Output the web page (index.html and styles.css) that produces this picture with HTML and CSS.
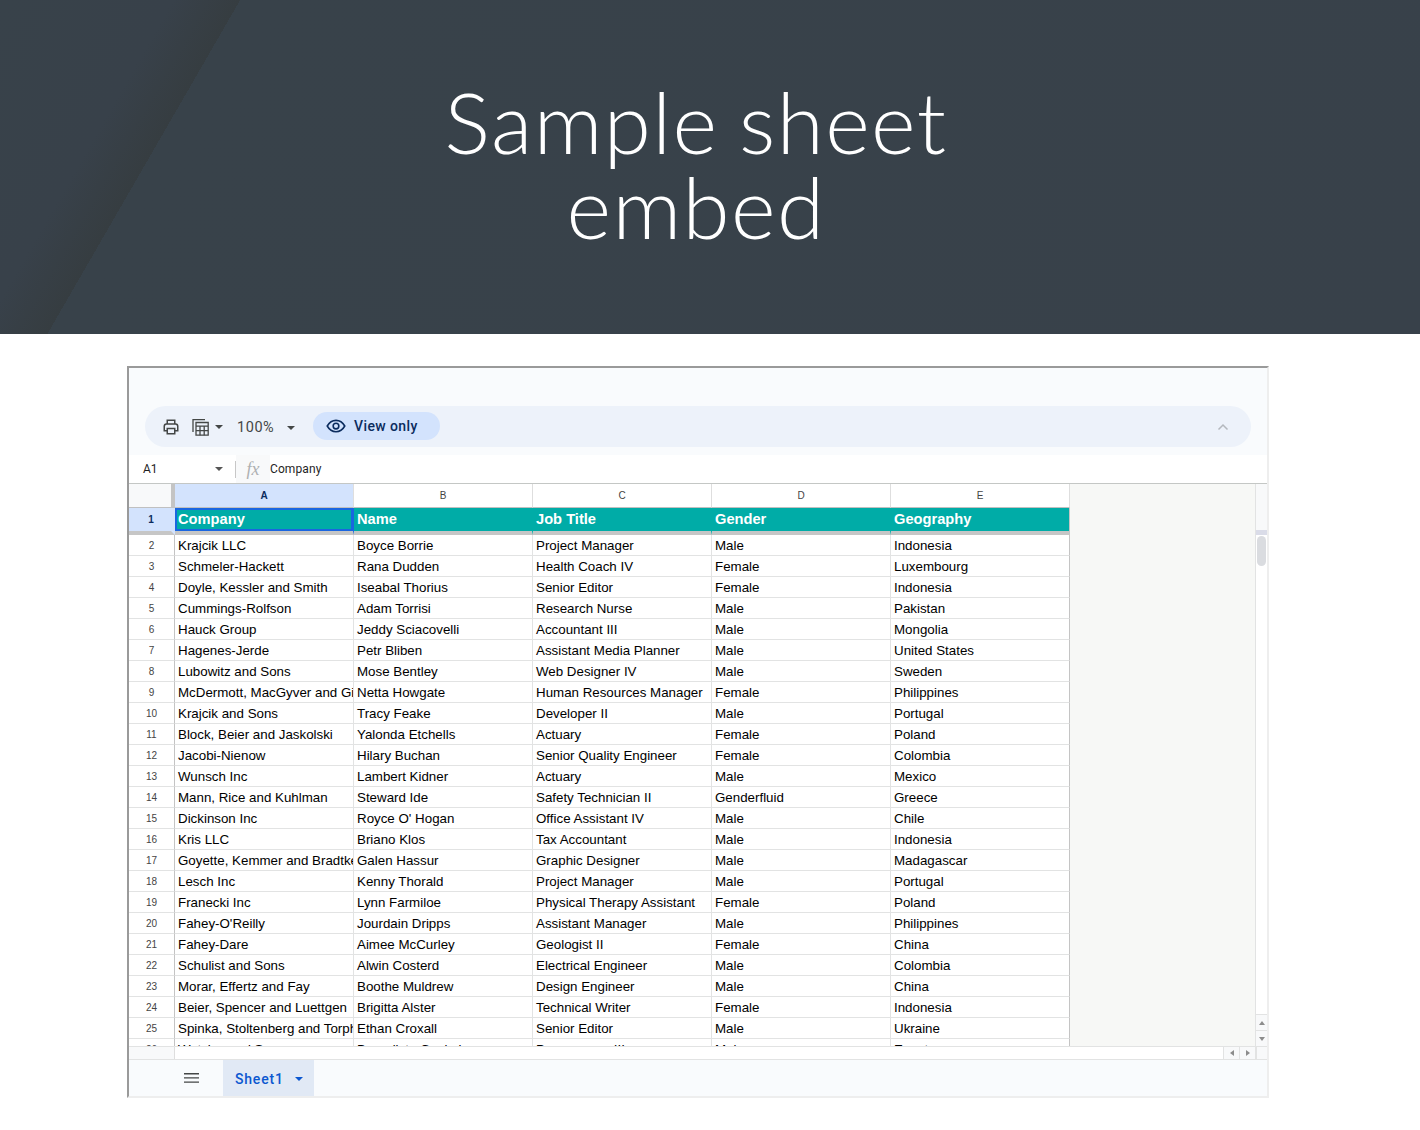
FILE: index.html
```html
<!DOCTYPE html>
<html lang="en">
<head>
<meta charset="utf-8">
<title>Sample sheet embed</title>
<link rel="stylesheet" href="styles.css">
</head>
<body>
<header class="hero"><h1>Sample sheet<br>embed</h1></header>
<main class="content">
<section class="embed">
  <div class="toolbar-zone">
    <div class="pill">
      <svg class="ic-print" width="18" height="18" viewBox="0 0 24 24" fill="none" stroke="#444746" stroke-width="2"><path d="M7 8V3h10v5"/><path d="M7 17H3v-6a3 3 0 0 1 3-3h12a3 3 0 0 1 3 3v6h-4"/><path d="M7 14h10v7H7z"/></svg>
      <svg class="ic-calc" width="18" height="18" viewBox="0 0 18 18" fill="none" stroke="#444746" stroke-width="1.3"><path d="M1 14V1.7h12"/><path d="M4 4.500h12.200v12.700H4z"/><path d="M4 8.200h12M8 8.200v9M12.200 8.200v9M4 12.600h12"/></svg>
      <span class="caret c1"></span>
      <span class="zoom-val">100%</span>
      <span class="caret c2"></span>
      <div class="view-only">
        <svg width="20" height="20" viewBox="0 0 24 24" fill="none" stroke="#0b2c5e" stroke-width="1.9"><path d="M1.500 12C4 7.500 7.600 5.200 12 5.200s8 2.300 10.500 6.800C20 16.500 16.400 18.800 12 18.800S4 16.500 1.500 12z"/><circle cx="12" cy="12" r="3.400"/></svg>
        <span>View only</span>
      </div>
      <svg class="chev" width="12" height="8" viewBox="0 0 12 8" fill="none" stroke="#b4b8bd" stroke-width="1.500"><path d="M1.500 6.500 6 2l4.500 4.500"/></svg>
    </div>
  </div>
  <div class="formula">
    <span class="cell-ref">A1</span>
    <span class="caret c3"></span>
    <span class="fdiv"></span>
    <span class="fx">fx</span>
    <span class="ftext">Company</span>
  </div>
  <div class="sheet">
    <div class="grid-wrap">
      <table class="grid">
        <colgroup><col class="c-h"><col class="c-d"><col class="c-d"><col class="c-d"><col class="c-d"><col class="c-d"><col></colgroup>
        <tr class="col-head"><th class="corner"></th><th class="sel">A</th><th>B</th><th>C</th><th>D</th><th>E</th><td class="void" rowspan="30"></td></tr>
        <tr class="head-row"><th class="sel">1</th><td class="active">Company</td><td>Name</td><td>Job Title</td><td>Gender</td><td>Geography</td></tr>
        <tr><th>2</th><td>Krajcik LLC</td><td>Boyce Borrie</td><td>Project Manager</td><td>Male</td><td>Indonesia</td></tr>
        <tr><th>3</th><td>Schmeler-Hackett</td><td>Rana Dudden</td><td>Health Coach IV</td><td>Female</td><td>Luxembourg</td></tr>
        <tr><th>4</th><td>Doyle, Kessler and Smith</td><td>Iseabal Thorius</td><td>Senior Editor</td><td>Female</td><td>Indonesia</td></tr>
        <tr><th>5</th><td>Cummings-Rolfson</td><td>Adam Torrisi</td><td>Research Nurse</td><td>Male</td><td>Pakistan</td></tr>
        <tr><th>6</th><td>Hauck Group</td><td>Jeddy Sciacovelli</td><td>Accountant III</td><td>Male</td><td>Mongolia</td></tr>
        <tr><th>7</th><td>Hagenes-Jerde</td><td>Petr Bliben</td><td>Assistant Media Planner</td><td>Male</td><td>United States</td></tr>
        <tr><th>8</th><td>Lubowitz and Sons</td><td>Mose Bentley</td><td>Web Designer IV</td><td>Male</td><td>Sweden</td></tr>
        <tr><th>9</th><td>McDermott, MacGyver and Gi</td><td>Netta Howgate</td><td>Human Resources Manager</td><td>Female</td><td>Philippines</td></tr>
        <tr><th>10</th><td>Krajcik and Sons</td><td>Tracy Feake</td><td>Developer II</td><td>Male</td><td>Portugal</td></tr>
        <tr><th>11</th><td>Block, Beier and Jaskolski</td><td>Yalonda Etchells</td><td>Actuary</td><td>Female</td><td>Poland</td></tr>
        <tr><th>12</th><td>Jacobi-Nienow</td><td>Hilary Buchan</td><td>Senior Quality Engineer</td><td>Female</td><td>Colombia</td></tr>
        <tr><th>13</th><td>Wunsch Inc</td><td>Lambert Kidner</td><td>Actuary</td><td>Male</td><td>Mexico</td></tr>
        <tr><th>14</th><td>Mann, Rice and Kuhlman</td><td>Steward Ide</td><td>Safety Technician II</td><td>Genderfluid</td><td>Greece</td></tr>
        <tr><th>15</th><td>Dickinson Inc</td><td>Royce O' Hogan</td><td>Office Assistant IV</td><td>Male</td><td>Chile</td></tr>
        <tr><th>16</th><td>Kris LLC</td><td>Briano Klos</td><td>Tax Accountant</td><td>Male</td><td>Indonesia</td></tr>
        <tr><th>17</th><td>Goyette, Kemmer and Bradtke</td><td>Galen Hassur</td><td>Graphic Designer</td><td>Male</td><td>Madagascar</td></tr>
        <tr><th>18</th><td>Lesch Inc</td><td>Kenny Thorald</td><td>Project Manager</td><td>Male</td><td>Portugal</td></tr>
        <tr><th>19</th><td>Franecki Inc</td><td>Lynn Farmiloe</td><td>Physical Therapy Assistant</td><td>Female</td><td>Poland</td></tr>
        <tr><th>20</th><td>Fahey-O'Reilly</td><td>Jourdain Dripps</td><td>Assistant Manager</td><td>Male</td><td>Philippines</td></tr>
        <tr><th>21</th><td>Fahey-Dare</td><td>Aimee McCurley</td><td>Geologist II</td><td>Female</td><td>China</td></tr>
        <tr><th>22</th><td>Schulist and Sons</td><td>Alwin Costerd</td><td>Electrical Engineer</td><td>Male</td><td>Colombia</td></tr>
        <tr><th>23</th><td>Morar, Effertz and Fay</td><td>Boothe Muldrew</td><td>Design Engineer</td><td>Male</td><td>China</td></tr>
        <tr><th>24</th><td>Beier, Spencer and Luettgen</td><td>Brigitta Alster</td><td>Technical Writer</td><td>Female</td><td>Indonesia</td></tr>
        <tr><th>25</th><td>Spinka, Stoltenberg and Torphy</td><td>Ethan Croxall</td><td>Senior Editor</td><td>Male</td><td>Ukraine</td></tr>
        <tr><th>26</th><td>Watsica and Sons</td><td>Benedicto Gaskoin</td><td>Programmer III</td><td>Male</td><td>Egypt</td></tr>
      </table>
      <div class="vscroll">
        <div class="vs-top"></div>
        <div class="vs-track"><div class="vs-thumb"></div></div>
        <div class="vs-btn"><span class="tri up"></span></div>
        <div class="vs-btn"><span class="tri down"></span></div>
      </div>
    </div>
    <div class="hscroll">
      <div class="hs-corner"></div>
      <div class="hs-track"></div>
      <div class="hs-btn"><span class="tri left"></span></div>
      <div class="hs-btn"><span class="tri right"></span></div>
      <div class="hs-end"></div>
    </div>
  </div>
  <footer class="tabs">
    <svg class="menu" width="16" height="10" viewBox="0 0 16 10" fill="#444746"><path d="M0 0h15v1.400H0zM0 4.200h15v1.400H0zM0 8.400h15v1.400H0z"/></svg>
    <div class="tab"><span>Sheet1</span><i class="caret c4"></i></div>
  </footer>
</section>
</main>
</body>
</html>
```
FILE: styles.css
```css
* { box-sizing: border-box; }
html, body { margin: 0; padding: 0; background: #fff; }
body { font-family: "Liberation Sans", Arial, sans-serif; }
.hero {
  height: 334px;
  background: linear-gradient(120deg, #38424a 0, #38414a 150px, #363d41 208px, #38424a 208px, #38414a 100%);
  padding-top: 79px;
}
.hero h1 {
  margin: 0;
  font-family: Lato, sans-serif;
  font-weight: 300;
  font-size: 85.4px;
  line-height: 85px;
  letter-spacing: 1.4px;
  word-spacing: -4px;
  color: #fff;
  text-align: center;
  padding-right: 28px;
}
.content { padding: 32px 151px 0 127px; height: 796px; }
.embed {
  width: 1142px;
  height: 732px;
  border: 2px solid;
  border-color: #9a9a9a #eeeeee #eeeeee #9a9a9a;
  display: flex;
  flex-direction: column;
  background: #f9fbfd;
  overflow: hidden;
}
.toolbar-zone { height: 88px; padding: 38px 16px 0; }
.pill {
  height: 41px;
  border-radius: 21px;
  background: #edf2fa;
  display: flex;
  align-items: center;
  padding-left: 17px;
  padding-right: 22px;
  color: #444746;
}
.ic-print { flex: none; }
.ic-calc { flex: none; margin-left: 12px; }
.caret {
  display: block;
  width: 0; height: 0;
  border-left: 4px solid transparent;
  border-right: 4px solid transparent;
  border-top: 4px solid #444746;
  flex: none;
}
.c1 { margin-left: 5px; }
.zoom-val {
  margin-left: 14px;
  margin-top: 2px;
  font-family: Roboto, sans-serif;
  font-size: 14.5px;
  letter-spacing: 0.55px;
  color: #444746;
  width: 42px;
}
.c2 { margin-left: 8px; margin-top: 2px; }
.view-only {
  margin-left: 18px;
  margin-bottom: 2px;
  height: 28px;
  width: 127px;
  border-radius: 14px;
  background: #d3e3fd;
  display: flex;
  align-items: center;
  padding-left: 13px;
  gap: 8px;
  color: #0b2c5e;
  font-family: Roboto, sans-serif;
  font-size: 14px;
  font-weight: 500;
  letter-spacing: 0.4px;
}
.chev { margin-left: auto; }
.formula {
  height: 29px;
  flex: none;
  background: #fff;
  display: flex;
  align-items: center;
  border-bottom: 1px solid #c4c7c5;
  padding-left: 14px;
  font-size: 12px;
  color: #1f1f1f;
}
.cell-ref { width: 72px; font-family: Roboto, sans-serif; }
.c3 { border-top-color: #555; }
.fdiv { width: 1px; height: 17px; background: #c7c7c7; margin-left: 12px; }
.fx {
  width: 34px;
  height: 28px;
  background: #f8f9fa;
  color: #aeb0b2;
  font-family: "Liberation Serif", serif;
  font-style: italic;
  font-size: 18px;
  line-height: 28px;
  text-align: center;
}
.ftext { font-family: Roboto, sans-serif; letter-spacing: 0.1px; }
.sheet { flex: none; height: 575px; background: #fff; display: flex; flex-direction: column; }
.grid-wrap { height: 562px; flex: none; display: flex; overflow: hidden; }
.grid {
  table-layout: fixed;
  width: 1126px;
  border-collapse: separate;
  border-spacing: 0;
  flex: none;
  font-size: 13.33px;
  color: #000;
  height: 0;
}
.c-h { width: 46px; }
.c-d { width: 179px; }
.grid th, .grid td { padding: 0; overflow: hidden; white-space: nowrap; }
.grid tr { height: 21px; }
.grid th {
  font-size: 10px;
  font-weight: 400;
  color: #444;
  text-align: center;
  border-right: 1px solid #c0c0c0;
  border-bottom: 1px solid #e2e3e3;
  background: #fff;
}
.grid td {
  padding: 1px 0 0 3px;
  border-right: 1px solid #e2e3e3;
  border-bottom: 1px solid #e2e3e3;
  line-height: 19px;
}
.grid tr > td:nth-child(6) { border-right-color: #c4c4c4; }
.col-head { height: 24px !important; }
.col-head th {
  border-bottom: 1px solid #c0c0c0;
  border-right: 1px solid #dedede;
  height: 24px;
}
.col-head th.corner {
  background: #f8f9fa;
  border-right: 4px solid #c0c0c0;
}
.col-head th.sel {
  background: #d3e3fd;
  color: #0b2c5e;
  font-weight: 700;
}
.head-row { height: 27px !important; }
.head-row th, .head-row td { height: 27px; border-bottom: 4px solid #c6c6c6; }
.head-row th {
  border-right: 4px solid #c0c0c0;
  padding-left: 2px;
}
.head-row th.sel {
  background: #d3e3fd;
  color: #0b2c5e;
  font-weight: 700;
  border-right-color: #d3e3fd;
}
.head-row td {
  padding-top: 0;
  background: #00aca7;
  background-clip: padding-box;
  color: #fff;
  font-weight: 700;
  font-size: 14.67px;
  border-right-color: #00aca7;
}
.head-row td.active {
  box-shadow: inset 0 0 0 2px #1a66e0;
  border-right-color: #1a66e0;
}
.grid tr > th:first-child { border-right-color: #c4c4c4; }
.col-head th.corner, .head-row th:first-child { border-right-width: 4px; }
.grid tr > th.sel:first-child { border-right-color: #d3e3fd; }
.void { background: #f7f8f6; border: 0 !important; }
.vscroll {
  flex: 1;
  border-left: 1px solid #e2e3e3;
  display: flex;
  flex-direction: column;
  background: #fff;
}
.vs-top { height: 51px; flex: none; background: #f8f9fa; border-bottom: 5px solid #dadce8; }
.vs-track { flex: 1; padding: 1px 1px 0 1px; }
.vs-thumb { width: 9px; height: 30px; border-radius: 5px; background: #dadce0; }
.vs-btn {
  height: 16px;
  flex: none;
  background: #f8f9fa;
  border-top: 1px solid #e2e3e3;
  display: flex;
  align-items: center;
  justify-content: center;
}
.tri { display: block; width: 0; height: 0; border: 3px solid transparent; }
.tri.up { border-bottom: 4px solid #8c8c8c; border-top: 0; }
.tri.down { border-top: 4px solid #8c8c8c; border-bottom: 0; }
.tri.left { border-right: 4px solid #8c8c8c; border-left: 0; }
.tri.right { border-left: 4px solid #8c8c8c; border-right: 0; }
.hscroll { height: 13px; flex: none; display: flex; border-top: 1px solid #e2e3e3; background: #fff; }
.hs-corner { width: 46px; background: #f8f9fa; border-right: 1px solid #dedede; flex: none; }
.hs-track { flex: 1; }
.hs-btn {
  width: 16px;
  flex: none;
  background: #f8f9fa;
  border-left: 1px solid #e2e3e3;
  display: flex;
  align-items: center;
  justify-content: center;
}
.hs-end { width: 12px; flex: none; background: #f8f9fa; border-left: 2px solid #e2e3e3; }
.tabs {
  flex: 1;
  border-top: 1px solid #e2e3e3;
  display: flex;
  align-items: flex-start;
  background: #f9fbfd;
}
.menu { margin-left: 55px; margin-top: 13px; flex: none; }
.tab {
  margin-left: 23px;
  width: 91px;
  height: 36px;
  background: #e1e9f5;
  display: flex;
  align-items: center;
  padding: 1px 0 0 12px;
  color: #0b57d0;
  font-family: Roboto, sans-serif;
  font-size: 14px;
  font-weight: 500;
  letter-spacing: 0.8px;
}
.c4 { margin-left: 11px; border-top-color: #0b57d0; }
```
